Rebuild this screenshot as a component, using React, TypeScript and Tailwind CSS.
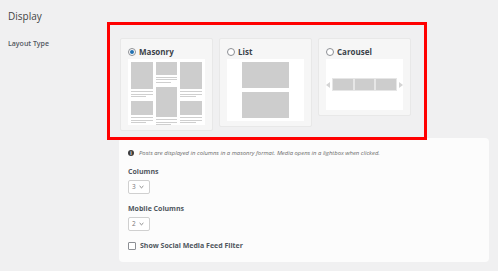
import { ReactNode } from 'react';

const font = { fontFamily: '"Open Sans", "Liberation Sans", sans-serif' };

function Radio({ checked }: { checked?: boolean }) {
  return (
    <span className="w-[8px] h-[8px] rounded-full border border-[#8c8f94] bg-white flex items-center justify-center shrink-0">
      {checked && <span className="w-[4px] h-[4px] rounded-full bg-[#2271b1]" />}
    </span>
  );
}

function Lines({ last = 'w-[70%]' }: { last?: string }) {
  return (
    <div className="flex flex-col gap-[1.5px] mt-[2px]">
      <div className="h-[1px] bg-[#cfcfcf] w-full" />
      <div className="h-[1px] bg-[#cfcfcf] w-full" />
      <div className={`h-[1px] bg-[#cfcfcf] ${last}`} />
    </div>
  );
}

function MasonryPreview() {
  return (
    <div className="bg-white h-[66px] flex gap-[3px] px-[3px] pt-[3px]">
      <div className="flex-1 flex flex-col">
        <div className="h-[27px] bg-[#cdcdcd]" />
        <Lines />
        <div className="h-[14px] bg-[#cdcdcd] mt-[4px]" />
        <Lines />
      </div>
      <div className="flex-1 flex flex-col">
        <div className="h-[14px] bg-[#cdcdcd]" />
        <Lines />
        <div className="h-[33px] bg-[#cdcdcd] mt-[4px]" />
        <Lines />
      </div>
      <div className="flex-1 flex flex-col">
        <div className="h-[27px] bg-[#cdcdcd]" />
        <Lines />
        <div className="h-[14px] bg-[#cdcdcd] mt-[4px]" />
        <Lines />
      </div>
    </div>
  );
}

function ListPreview() {
  return (
    <div className="bg-white h-[62px] flex flex-col items-center justify-center gap-[4px]">
      <div className="w-[47px] h-[26px] bg-[#cdcdcd]" />
      <div className="w-[47px] h-[26px] bg-[#cdcdcd]" />
    </div>
  );
}

function CarouselPreview() {
  return (
    <div className="bg-white h-[51px] flex items-center justify-center gap-[2px]">
      <span className="w-0 h-0 border-y-[3px] border-y-transparent border-r-[4px] border-r-[#d4d4d4] mr-[1px]" />
      <div className="w-[20px] h-[11px] bg-[#cdcdcd] outline outline-1 outline-[#e6e6e6]" />
      <div className="w-[20px] h-[11px] bg-[#cdcdcd] outline outline-1 outline-[#e6e6e6]" />
      <div className="w-[20px] h-[11px] bg-[#cdcdcd] outline outline-1 outline-[#e6e6e6]" />
      <span className="w-0 h-0 border-y-[3px] border-y-transparent border-l-[4px] border-l-[#d4d4d4] ml-[1px]" />
    </div>
  );
}

function Card({ label, checked, children }: { label: string; checked?: boolean; children: ReactNode }) {
  return (
    <div className="w-[93px] bg-[#f6f6f6] border border-[#e8e8e8] rounded-[2px] px-[7px] pt-[6px] pb-[5px]">
      <div className="h-[14px] flex items-center gap-[3px]">
        <Radio checked={checked} />
        <span className="text-[8px] font-bold text-[#3c434a] leading-[10px]">{label}</span>
      </div>
      {children}
    </div>
  );
}

function Select({ value }: { value: string }) {
  return (
    <div className="mt-[4px] w-[22px] h-[14px] bg-white border border-[#d0d0d0] rounded-[2px] flex items-center gap-[3px] pl-[3px] text-[6.5px] text-[#777]">
      <span>{value}</span>
      <svg width="5" height="4" viewBox="0 0 5 4" fill="none">
        <path d="M0.6 1 L2.5 2.8 L4.4 1" stroke="#777" strokeWidth="0.9" />
      </svg>
    </div>
  );
}

export default function App() {
  return (
    <div className="w-[498px] h-[271px] bg-[#f0f0f1] overflow-hidden text-[#3c434a]" style={font}>
      <div className="pl-[8px] pt-[10px] h-[22px] text-[10px] leading-[12px] font-medium text-[#444]">Display</div>
      <div className="flex">
        <div className="w-[107px] pl-[8px] pt-[18px] text-[7px] leading-[8px] font-semibold text-[#50575e]">
          Layout Type
        </div>
        <div className="flex flex-col">
          <div className="relative z-10 w-[320px] border-[3px] border-[#ff0000] pl-[10px] pt-[13px] pb-[6px] flex items-start gap-[6px]">
            <Card label="Masonry" checked>
              <MasonryPreview />
            </Card>
            <Card label="List">
              <ListPreview />
            </Card>
            <Card label="Carousel">
              <CarouselPreview />
            </Card>
          </div>
          <div className="ml-[12px] mt-[-2px] w-[370px] bg-[#fcfcfc] rounded-[4px] pl-[9px] pt-[11px] pb-[12px]">
            <div className="h-[8px] flex items-center gap-[5px]">
              <span className="w-[6px] h-[6px] rounded-full bg-[#3c3c3c] text-white text-[4.5px] font-bold leading-[6px] text-center">i</span>
              <span className="text-[5.9px] italic text-[#6a6a6a] whitespace-nowrap">
                Posts are displayed in columns in a masonry format. Media opens in a lightbox when clicked.
              </span>
            </div>
            <div className="mt-[11px] text-[7px] leading-[8px] font-bold text-[#50575e]">Columns</div>
            <Select value="3" />
            <div className="mt-[11px] text-[7px] leading-[8px] font-bold text-[#50575e]">Mobile Columns</div>
            <Select value="2" />
            <div className="mt-[11px] h-[8px] flex items-center gap-[4px]">
              <span className="w-[8px] h-[8px] bg-white border border-[#8c8f94] rounded-[1px]" />
              <span className="text-[7px] font-bold text-[#50575e] leading-[8px]">Show Social Media Feed Filter</span>
            </div>
          </div>
        </div>
      </div>
    </div>
  );
}
